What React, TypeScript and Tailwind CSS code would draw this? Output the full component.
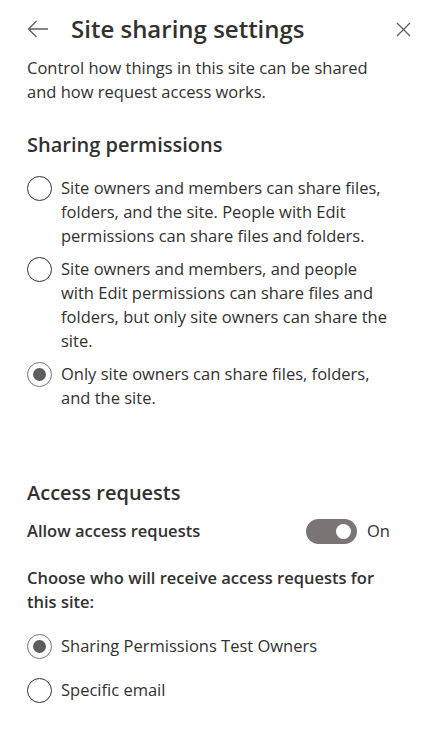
import React, { useState } from "react";

const font = { fontFamily: '"Open Sans", "Noto Sans", sans-serif' };

function Radio({ checked }: { checked: boolean }) {
  return (
    <span
      className={
        "flex h-[25px] w-[25px] shrink-0 items-center justify-center rounded-full border-[1.5px] " +
        (checked ? "border-[#7a7574]" : "border-[#323130]")
      }
    >
      {checked && <span className="h-[13px] w-[13px] rounded-full bg-[#605e5c]" />}
    </span>
  );
}

function Option({ checked, children }: { checked: boolean; children: React.ReactNode }) {
  return (
    <label className="flex items-start gap-[9px]">
      <Radio checked={checked} />
      <span className="text-[16.5px] leading-[24px] text-[#323130]">{children}</span>
    </label>
  );
}

export default function App() {
  const [share] = useState(2);
  const [recv] = useState(0);

  return (
    <div className="h-[747px] w-[431px] bg-white text-[#323130]" style={font}>
      {/* header */}
      <div className="flex items-center pl-[27px] pr-[20px] pt-[11px]">
        <svg width="22" height="18" viewBox="0 0 22 18" className="text-[#605e5c]">
          <path d="M21 9H1.5M9.5 1L1.5 9l8 8" fill="none" stroke="currentColor" strokeWidth="1.3" />
        </svg>
        <h1 className="ml-[22px] text-[24px] font-semibold leading-[36px]">Site sharing settings</h1>
        <svg width="15" height="15" viewBox="0 0 15 15" className="ml-auto text-[#605e5c]">
          <path d="M1 1l13 13M14 1L1 14" fill="none" stroke="currentColor" strokeWidth="1.3" />
        </svg>
      </div>

      <div className="px-[27px]">
        <p className="mt-[9px] text-[16.5px] leading-[24px]">
          Control how things in this site can be shared
          <br />
          and how request access works.
        </p>

        <h2 className="mt-[27px] text-[20px] font-semibold leading-[28px]">Sharing permissions</h2>

        <div className="mt-[17px] flex flex-col gap-[9px]">
          <Option checked={share === 0}>
            Site owners and members can share files,
            <br />
            folders, and the site. People with Edit
            <br />
            permissions can share files and folders.
          </Option>
          <Option checked={share === 1}>
            Site owners and members, and people
            <br />
            with Edit permissions can share files and
            <br />
            folders, but only site owners can share the
            <br />
            site.
          </Option>
          <Option checked={share === 2}>
            Only site owners can share files, folders,
            <br />
            and the site.
          </Option>
        </div>

        <h2 className="mt-[69px] text-[20px] font-semibold leading-[28px]">Access requests</h2>

        <div className="mt-[12px] flex items-center">
          <span className="w-[279px] text-[16.5px] font-semibold">Allow access requests</span>
          <span className="flex h-[25px] w-[51px] items-center justify-end rounded-full bg-[#7a7574] pr-[6px]">
            <span className="h-[15px] w-[15px] rounded-full bg-white" />
          </span>
          <span className="ml-[10px] text-[16.5px]">On</span>
        </div>

        <p className="mt-[22px] text-[16.5px] font-semibold leading-[24px]">
          Choose who will receive access requests for
          <br />
          this site:
        </p>

        <div className="mt-[20px] flex flex-col gap-[19px]">
          <Option checked={recv === 0}>Sharing Permissions Test Owners</Option>
          <Option checked={recv === 1}>Specific email</Option>
        </div>
      </div>
    </div>
  );
}
